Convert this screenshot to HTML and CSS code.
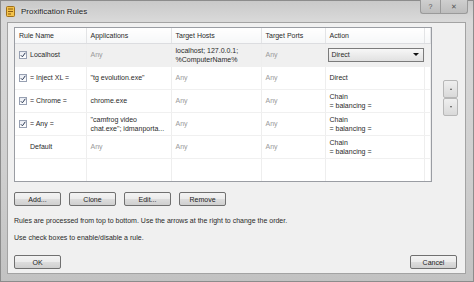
FILE: index.html
```html
<!DOCTYPE html>
<html lang="en">
<head>
    <meta charset="UTF-8">
    <title>Proxification Rules</title>
    <link rel="stylesheet" href="styles.css">
</head>
<body>
    <div class="window">
        <div class="titlebar">
            <svg class="app-icon" width="9" height="11" viewBox="0 0 9 11">
                <rect x="0.5" y="0.5" width="8" height="10" rx="1" fill="#f3c24a" stroke="#a0701a"/>
                <rect x="2" y="2.5" width="5" height="1" fill="#8a5a10"/>
                <rect x="2" y="5" width="5" height="1" fill="#8a5a10"/>
                <rect x="2" y="7.5" width="3" height="1" fill="#8a5a10"/>
            </svg>
            <span class="title">Proxification Rules</span>
            <div class="caption-buttons">
                <span class="cap-btn help">?</span>
                <span class="cap-btn close">✕</span>
            </div>
        </div>

        <div class="client">
            <div class="rules-area">
                <div class="rules-list">
                    <table>
                        <colgroup>
                            <col style="width: 71px">
                            <col style="width: 85px">
                            <col style="width: 90px">
                            <col style="width: 64px">
                            <col style="width: 99px">
                            <col>
                        </colgroup>
                        <thead>
                            <tr>
                                <th>Rule Name</th>
                                <th>Applications</th>
                                <th>Target Hosts</th>
                                <th>Target Ports</th>
                                <th>Action</th>
                                <th></th>
                            </tr>
                        </thead>
                        <tbody>
                            <tr class="selected">
                                <td><span class="check"><svg width="6" height="6" viewBox="0 0 6 6"><path d="M0.8 3.2 L2.4 4.8 L5.3 0.8" fill="none" stroke="#2b3a55" stroke-width="1"/></svg></span>Localhost</td>
                                <td class="muted">Any</td>
                                <td>localhost; 127.0.0.1;<br>%ComputerName%</td>
                                <td class="muted">Any</td>
                                <td>
                                    <div class="combo">
                                        <span>Direct</span>
                                        <span class="combo-arrow"></span>
                                    </div>
                                </td>
                                <td></td>
                            </tr>
                            <tr>
                                <td><span class="check"><svg width="6" height="6" viewBox="0 0 6 6"><path d="M0.8 3.2 L2.4 4.8 L5.3 0.8" fill="none" stroke="#2b3a55" stroke-width="1"/></svg></span>= Inject XL =</td>
                                <td>"tg evolution.exe"</td>
                                <td class="muted">Any</td>
                                <td class="muted">Any</td>
                                <td>Direct</td>
                                <td></td>
                            </tr>
                            <tr>
                                <td><span class="check"><svg width="6" height="6" viewBox="0 0 6 6"><path d="M0.8 3.2 L2.4 4.8 L5.3 0.8" fill="none" stroke="#2b3a55" stroke-width="1"/></svg></span>= Chrome =</td>
                                <td>chrome.exe</td>
                                <td class="muted">Any</td>
                                <td class="muted">Any</td>
                                <td>Chain<br>= balancing =</td>
                                <td></td>
                            </tr>
                            <tr>
                                <td><span class="check"><svg width="6" height="6" viewBox="0 0 6 6"><path d="M0.8 3.2 L2.4 4.8 L5.3 0.8" fill="none" stroke="#2b3a55" stroke-width="1"/></svg></span>= Any =</td>
                                <td>"camfrog video<br>chat.exe"; idmanporta...</td>
                                <td class="muted">Any</td>
                                <td class="muted">Any</td>
                                <td>Chain<br>= balancing =</td>
                                <td></td>
                            </tr>
                            <tr>
                                <td class="no-check">Default</td>
                                <td class="muted">Any</td>
                                <td class="muted">Any</td>
                                <td class="muted">Any</td>
                                <td>Chain<br>= balancing =</td>
                                <td></td>
                            </tr>
                            <tr class="filler">
                                <td></td><td></td><td></td><td></td><td></td><td></td>
                            </tr>
                        </tbody>
                    </table>
                </div>
                <div class="order-buttons">
                    <button class="arrow"><span class="dot up"></span></button>
                    <button class="arrow"><span class="dot down"></span></button>
                </div>
            </div>

            <div class="actions">
                <button class="btn">Add...</button>
                <button class="btn">Clone</button>
                <button class="btn">Edit...</button>
                <button class="btn">Remove</button>
            </div>

            <p class="hint">Rules are processed from top to bottom. Use the arrows at the right to change the order.</p>
            <p class="hint">Use check boxes to enable/disable a rule.</p>

            <div class="footer">
                <button class="btn">OK</button>
                <button class="btn">Cancel</button>
            </div>
        </div>
    </div>
</body>
</html>
```

FILE: styles.css
```css
* {
    box-sizing: border-box;
    margin: 0;
    padding: 0;
}

body {
    width: 474px;
    height: 282px;
    overflow: hidden;
    font-family: 'Liberation Sans', Arial, sans-serif;
    font-size: 7px;
    color: #2a2a2a;
}

.window {
    width: 474px;
    height: 282px;
    display: flex;
    flex-direction: column;
    padding: 0 7px 7px 6px;
    background: linear-gradient(to bottom, #c9c9c9 0, #d9d9d9 20px, #cfcfcf 60%, #c2c2c2 100%);
    border: 1px solid #8c8c8c;
}

/* Barra de titulo */
.titlebar {
    height: 21px;
    display: flex;
    align-items: center;
    margin-right: -2px;
}

.app-icon {
    margin-left: -1px;
    margin-top: -1px;
}

.title {
    margin-left: 6px;
    font-size: 8px;
    color: #1e1e1e;
    text-shadow: 0 0 3px #f2f2f2;
}

.caption-buttons {
    margin-left: auto;
    align-self: flex-start;
    display: flex;
    margin-top: -1px;
}

.cap-btn {
    height: 14px;
    display: flex;
    align-items: center;
    justify-content: center;
    font-size: 7px;
    color: #555;
    background: linear-gradient(to bottom, #cfcfcf, #bdbdbd);
    border: 1px solid #9a9a9a;
    border-top: none;
}

.cap-btn.help {
    width: 20px;
    border-radius: 0 0 0 3px;
    border-right: none;
}

.cap-btn.close {
    width: 28px;
    border-radius: 0 0 3px 0;
}

/* Area do dialogo */
.client {
    flex: 1;
    background-color: #f0f0f0;
    border: 1px solid #a3a3a3;
    padding: 4px 7px 4px 6px;
    display: flex;
    flex-direction: column;
}

.rules-area {
    display: flex;
}

.rules-list {
    width: 420px;
    height: 155px;
    background-color: #fff;
    border: 1px solid #9a9da3;
}

table {
    width: 100%;
    height: 100%;
    border-collapse: collapse;
    table-layout: fixed;
}

th {
    height: 15px;
    font-weight: normal;
    text-align: left;
    padding: 0 4px;
    white-space: nowrap;
    background: linear-gradient(to bottom, #ffffff, #f6f7f8);
    border-right: 1px solid #e3e4e6;
    border-bottom: 1px solid #dcdde0;
}

td {
    height: 23px;
    padding: 0 4px;
    line-height: 9px;
    white-space: nowrap;
    overflow: hidden;
    vertical-align: middle;
    border-right: 1px solid #eeeeee;
    border-bottom: 1px solid #f0f0f0;
}

tr.selected td {
    background-color: #f0f0f0;
}

tr.filler td {
    height: auto;
    border-bottom: none;
}

td.muted {
    color: #9a9a9a;
}

td.no-check {
    padding-left: 15px;
}

.check {
    display: inline-flex;
    align-items: center;
    justify-content: center;
    width: 8px;
    height: 8px;
    margin-right: 3px;
    vertical-align: -1px;
    border: 1px solid #97a0b2;
    background: linear-gradient(to bottom, #e9ecf3, #ffffff);
}

.combo {
    width: 96px;
    height: 14px;
    margin-left: -2px;
    padding: 0 4px 0 3px;
    display: flex;
    align-items: center;
    justify-content: space-between;
    border: 1px solid #7b7b7b;
    background: linear-gradient(to bottom, #f7f7f7, #e1e1e1);
}

.combo-arrow {
    width: 0;
    height: 0;
    border-left: 3px solid transparent;
    border-right: 3px solid transparent;
    border-top: 3px solid #111;
}

.order-buttons {
    margin: 53px 0 0 11px;
    display: flex;
    flex-direction: column;
}

.arrow {
    width: 15px;
    height: 18px;
    display: flex;
    align-items: center;
    justify-content: center;
    border: 1px solid #b7b7b7;
    border-radius: 2px;
    background: linear-gradient(to bottom, #efefef, #d9d9d9);
}

.dot {
    width: 0;
    height: 0;
    border-left: 1.5px solid transparent;
    border-right: 1.5px solid transparent;
}

.dot.up {
    border-bottom: 2px solid #555;
}

.dot.down {
    border-top: 2px solid #555;
}

/* Botoes */
.actions {
    display: flex;
    gap: 8px;
    margin-top: 10px;
}

.btn {
    width: 47px;
    height: 14px;
    font-family: 'Liberation Sans', Arial, sans-serif;
    font-size: 7px;
    color: #222;
    border: 1px solid #707070;
    border-radius: 2px;
    background: linear-gradient(to bottom, #f3f3f3 0, #ebebeb 50%, #dddddd 51%, #cfcfcf 100%);
}

.hint {
    margin-top: 11px;
    line-height: 8px;
}

.hint + .hint {
    margin-top: 9px;
}

.footer {
    margin-top: auto;
    display: flex;
    justify-content: space-between;
    padding-right: 1px;
}
```
